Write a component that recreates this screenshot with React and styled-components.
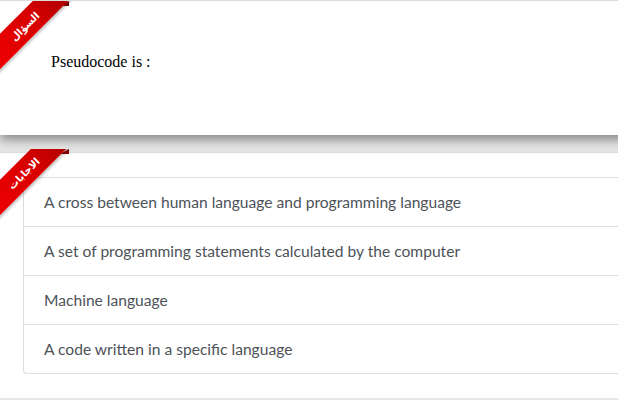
import styled, { createGlobalStyle } from "styled-components";

const GlobalStyle = createGlobalStyle`
  body {
    margin: 0;
    background: #e6e6e6;
    overflow: hidden;
  }
`;

const Page = styled.div`
  display: flex;
  flex-direction: column;
  gap: 17px;
  width: 640px;
`;

const Card = styled.div`
  position: relative;
  background: #fff;
  border-top: 1px solid #dcdcdc;
  box-shadow: ${(p) => (p.$raised ? "0 5px 10px rgba(0, 0, 0, 0.4)" : "0 1px 2px rgba(0, 0, 0, 0.15)")};
  height: ${(p) => p.$height}px;
  box-sizing: border-box;
`;

const Question = styled.div`
  padding: 52px 51px;
  font-family: "Liberation Serif", "Times New Roman", serif;
  font-size: 16px;
  color: #000;
`;

const RibbonBox = styled.div`
  position: absolute;
  top: ${(p) => p.$top}px;
  left: 0;
  width: 76px;
  height: 76px;
  overflow: hidden;
  z-index: 2;
`;

const Fold = styled.span`
  position: absolute;
  top: 0;
  left: 60px;
  width: 0;
  height: 0;
  border-left: 9px solid transparent;
  border-bottom: 5px solid #8e0000;
`;

const RibbonBand = styled.span`
  position: absolute;
  left: ${(p) => p.$c - 55}px;
  top: ${(p) => p.$c - 12.5}px;
  width: 110px;
  height: 25px;
  line-height: 25px;
  transform: rotate(-45deg);
  background: linear-gradient(90deg, #f00000 0%, #d80000 60%, #a80000 100%);
  color: #fff;
  text-align: center;
  font-family: "DejaVu Sans", "Noto Sans", sans-serif;
  font-size: 10px;
  font-weight: bold;
  box-shadow: 0 2px 3px rgba(0, 0, 0, 0.25);
`;

const Answers = styled.div`
  padding: 24px 0 0 23px;
`;

const List = styled.ul`
  list-style: none;
  margin: 0;
  padding: 0;
  border: 1px solid #dddddd;
  border-right: none;
  border-radius: 4px 0 0 4px;
  background: #fff;
`;

const Item = styled.li`
  padding: 14px 20px;
  line-height: 20px;
  font-family: Lato, "Open Sans", sans-serif;
  font-size: 15.6px;
  color: #4d5258;
  & + & {
    border-top: 1px solid #dddddd;
  }
`;

function Ribbon({ label, top, c }) {
  return (
    <RibbonBox $top={top}>
      <Fold />
      <RibbonBand $c={c}>{label}</RibbonBand>
    </RibbonBox>
  );
}

const answers = [
  "A cross between human language and programming language",
  "A set of programming statements calculated by the computer",
  "Machine language",
  "A code written in a specific language",
];

export default function App() {
  return (
    <>
      <GlobalStyle />
      <Page>
        <Card $raised $height={135}>
          <Ribbon label="السؤال" top={0} c={25} />
          <Question>Pseudocode is :</Question>
        </Card>
        <Card $height={246}>
          <Ribbon label="الاجابات" top={-4} c={24} />
          <Answers>
            <List>
              {answers.map((a) => (
                <Item key={a}>{a}</Item>
              ))}
            </List>
          </Answers>
        </Card>
      </Page>
    </>
  );
}
